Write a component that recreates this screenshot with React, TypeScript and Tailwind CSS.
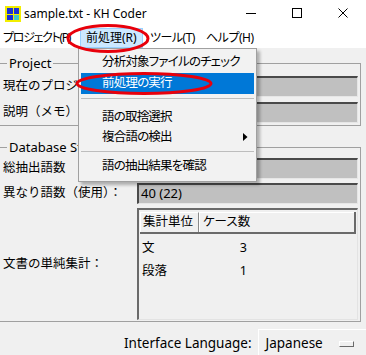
import React from "react";

function AppIcon() {
  return (
    <svg width="16" height="16" viewBox="0 0 16 16" className="shrink-0">
      <rect x="0" y="0" width="16" height="16" fill="#f2ee00" />
      <rect x="2" y="2" width="6" height="6" fill="#1c33d6" />
      <rect x="9" y="2" width="5" height="6" fill="#1c33d6" />
      <rect x="2" y="9" width="6" height="5" fill="#1c33d6" />
      <rect x="9" y="9" width="5" height="5" fill="#3ec9c9" />
    </svg>
  );
}

function Field({ children }: { children?: React.ReactNode }) {
  return (
    <div className="flex-1 mr-[2px] h-[21px] bg-[#c0c0c0] border-t-2 border-l-2 border-t-[#4a4a4a] border-l-[#4a4a4a] border-b border-r border-b-[#e6e6e6] border-r-[#e6e6e6] flex items-center pl-[2px] text-[13px]">
      {children}
    </div>
  );
}

function Label({ children }: { children: React.ReactNode }) {
  return <div className="w-[137px] shrink-0 pl-[3px] text-[12.5px] whitespace-nowrap overflow-hidden">{children}</div>;
}

export default function App() {
  return (
    <div className="relative w-[366px] h-[355px] overflow-hidden bg-[#f0f0f0] text-black font-['Noto_Sans','Noto_Sans_CJK_JP',sans-serif]">
      {/* Title bar */}
      <div className="h-[28px] bg-white flex items-center">
        <div className="ml-[5px]">
          <AppIcon />
        </div>
        <span className="ml-[3px] text-[12px] leading-none pb-[1px] whitespace-nowrap">sample.txt - KH Coder</span>
        <div className="ml-auto flex h-full pb-[2px]">
          <div className="w-[46px] h-full flex items-center justify-center">
            <div className="w-[10px] h-[1px] bg-black" />
          </div>
          <div className="w-[46px] h-full flex items-center justify-center">
            <div className="w-[10px] h-[10px] border border-black" />
          </div>
          <div className="w-[46px] h-full flex items-center justify-center">
            <svg width="10" height="10" viewBox="0 0 10 10">
              <path d="M0.5 0.5 L9.5 9.5 M9.5 0.5 L0.5 9.5" stroke="#000" strokeWidth="1" fill="none" />
            </svg>
          </div>
        </div>
      </div>

      {/* Menu bar */}
      <div className="h-[20px] bg-white flex items-stretch text-[12px] [font-feature-settings:'palt'] whitespace-nowrap">
        <div className="w-[80px] pl-[3px] flex items-center tracking-[-1.3px] overflow-hidden">プロジェクト(P)</div>
        <div className="w-[63px] pl-[5px] flex items-center bg-[#cce8ff] border border-[#99d1ff]">前処理(R)</div>
        <div className="w-[56px] pl-[7px] flex items-center tracking-[-0.5px]">ツール(T)</div>
        <div className="pl-[7px] flex items-center tracking-[-0.5px]">ヘルプ(H)</div>
      </div>

      {/* Project group */}
      <fieldset className="mt-[6px] mr-[5px] border border-l-0 border-[#a0a0a0] pb-[2px]">
        <legend className="ml-[7px] px-[2px] text-[13px] leading-[18px]">Project</legend>
        <div className="flex items-center mt-[4px]">
          <Label>現在のプロジェクト</Label>
          <Field />
        </div>
        <div className="flex items-center mt-[5px]">
          <Label>説明（メモ）</Label>
          <Field />
        </div>
      </fieldset>

      {/* Database group */}
      <fieldset className="mt-[12px] mr-[5px] border border-l-0 border-[#a0a0a0] pb-[1px]">
        <legend className="ml-[7px] px-[2px] text-[13px] leading-[18px]">Database Stats</legend>
        <div className="flex items-center mt-[2px]">
          <Label>総抽出語数</Label>
          <Field />
        </div>
        <div className="flex items-center mt-[4px]">
          <Label>異なり語数（使用）：</Label>
          <Field>40 (22)</Field>
        </div>
        <div className="flex items-center mt-[4px] h-[112px]">
          <Label>文書の単純集計：</Label>
          <div className="flex-1 mr-[2px] h-full border-t-2 border-l-2 border-t-[#6a6a6a] border-l-[#6a6a6a] border-b border-r border-b-[#e3e3e3] border-r-[#e3e3e3] pt-[2px] pl-[1px] pr-[1px] text-[12.5px] [font-feature-settings:'palt']">
            <div className="flex h-[22px] border-b-2 border-b-[#6a6a6a] border-r-2 border-r-[#6a6a6a]">
              <div className="w-[59px] shrink-0 pl-[2px] flex items-center border-t border-l border-white border-r border-r-[#8a8a8a]">集計単位</div>
              <div className="flex-1 pl-[3px] flex items-center border-t border-l border-white">ケース数</div>
            </div>
            <div className="pt-[3px]">
              <div className="flex h-[23px] items-center">
                <div className="w-[59px] shrink-0 pl-[2px]">文</div>
                <div className="w-[48px] text-right">3</div>
              </div>
              <div className="flex h-[23px] items-center">
                <div className="w-[59px] shrink-0 pl-[2px]">段落</div>
                <div className="w-[48px] text-right">1</div>
              </div>
            </div>
          </div>
        </div>
      </fieldset>

      {/* Bottom bar */}
      <div className="mt-[7px] h-[28px] flex items-center pl-[124px] text-[13.5px] whitespace-nowrap">
        <span>Interface Language:</span>
        <div className="ml-[6px] w-[110px] h-[28px] shrink-0 flex items-center border-t border-l border-white">
          <span className="w-[80px] pl-[7px]">Japanese</span>
          <span className="w-[15px] h-[6px] bg-[#f0f0f0] border-t border-l border-white border-b border-r border-b-[#6a6a6a] border-r-[#6a6a6a]" />
        </div>
      </div>

      {/* Dropdown menu */}
      <div className="absolute left-[78px] top-[48px] w-[179px] bg-[#f2f2f2] border border-[#a0a0a0] shadow-[3px_3px_3px_rgba(0,0,0,0.28)] pt-[3px] pb-[4px] text-[12.5px] tracking-[-0.8px] [font-feature-settings:'palt'] whitespace-nowrap">
        <div className="mx-[2px] h-[21px] flex items-center pl-[21px]">分析対象ファイルのチェック</div>
        <div className="mx-[2px] h-[21px] flex items-center pl-[21px] bg-[#0078d7] text-white">前処理の実行</div>
        <div className="mx-[2px] h-[13px] pt-[4px]">
          <div className="h-[1px] bg-[#bdbdbd]" />
        </div>
        <div className="mx-[2px] h-[20px] flex items-center pl-[21px]">語の取捨選択</div>
        <div className="mx-[2px] h-[20px] flex items-center pl-[21px] pr-[6px]">
          <span>複合語の検出</span>
          <svg className="ml-auto" width="5" height="8" viewBox="0 0 5 8">
            <path d="M0 0 L4.5 4 L0 8 Z" fill="#000" />
          </svg>
        </div>
        <div className="mx-[2px] h-[9px] pt-[4px]">
          <div className="h-[1px] bg-[#bdbdbd]" />
        </div>
        <div className="mx-[2px] h-[21px] flex items-center pl-[21px]">語の抽出結果を確認</div>
      </div>

      {/* Red annotation ellipses */}
      <svg className="absolute left-0 top-0 pointer-events-none" width="366" height="355" viewBox="0 0 366 355">
        <ellipse cx="108" cy="38.5" rx="40" ry="13" fill="none" stroke="#e8000b" strokeWidth="3" />
        <ellipse cx="144" cy="83.5" rx="67" ry="10" fill="none" stroke="#e8000b" strokeWidth="3" />
      </svg>
    </div>
  );
}
